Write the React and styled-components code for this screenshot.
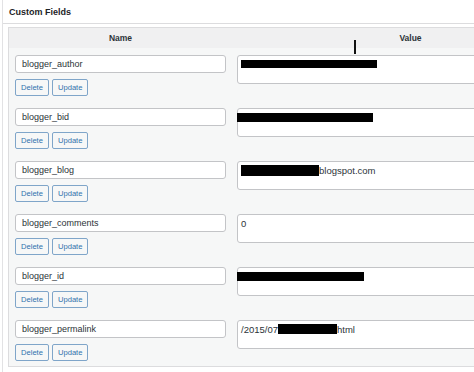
import React from 'react';
import styled, { createGlobalStyle } from 'styled-components';

const GlobalStyle = createGlobalStyle`
  html, body {
    margin: 0;
    padding: 0;
    background: #fff;
    overflow: hidden;
  }

  body {
    font-family: "Liberation Sans", Arial, sans-serif;
    color: #1d2327;
  }
`;

const Page = styled.div`
  position: relative;
  width: 474px;
  height: 372px;
  overflow: hidden;
`;

const Panel = styled.div`
  margin-left: 2px;
  width: 620px;
  min-height: 372px;
  border-left: 1px solid #e2e2e4;
`;

const Heading = styled.h2`
  margin: 0;
  height: 23px;
  display: flex;
  align-items: center;
  padding-left: 6px;
  font-size: 9px;
  font-weight: 700;
  color: #1d2327;
  border-bottom: 1px solid #dcdcde;
`;

const Inside = styled.div`
  padding: 3px 0 0 5px;
`;

const Table = styled.div`
  width: 580px;
  border: 1px solid #dcdcde;
  background: #f6f7f7;
`;

const HeadRow = styled.div`
  display: grid;
  grid-template-columns: 223px 1fr;
  height: 20px;
  background: #f0f0f1;
`;

const HeadCell = styled.div`
  display: flex;
  align-items: center;
  justify-content: center;
  font-size: 8.5px;
  font-weight: 700;
  color: #2c3338;
`;

const Row = styled.div`
  display: grid;
  grid-template-columns: 223px 1fr;
  height: 53px;
`;

const NameCell = styled.div`
  padding: 7px 6px 0 6px;
`;

const KeyInput = styled.input`
  display: block;
  box-sizing: border-box;
  width: 211px;
  height: 18px;
  margin: 0;
  padding: 0 6px;
  border: 1px solid #c3c4c7;
  border-radius: 3px;
  background: #fff;
  font-family: inherit;
  font-size: 9px;
  color: #2c3338;
  outline: none;
`;

const Actions = styled.div`
  display: flex;
  gap: 3px;
  margin-top: 6px;
`;

const SmallButton = styled.button`
  box-sizing: border-box;
  height: 17px;
  padding: 0 5px;
  margin: 0;
  border: 1px solid #7fa5c9;
  border-radius: 2px;
  background: #f6f7f7;
  color: #2f72ad;
  font-family: inherit;
  font-size: 7.6px;
  line-height: 15px;
  cursor: pointer;
`;

const ValueCell = styled.div`
  padding: 7px 0 0 5px;
`;

const ValueBox = styled.div`
  box-sizing: border-box;
  width: 350px;
  height: 29px;
  padding: 3px 3px;
  border: 1px solid #c3c4c7;
  border-radius: 3px;
  background: #fff;
  font-size: 9.5px;
  line-height: 11px;
  color: #2c3338;
  white-space: nowrap;
`;

const Redact = styled.span`
  display: inline-block;
  vertical-align: top;
  width: ${(p) => p.$w}px;
  height: ${(p) => p.$h}px;
  margin-top: ${(p) => p.$top || 0}px;
  margin-left: ${(p) => (p.$bleed ? -4 : 0)}px;
  background: #000;
`;

const Cursor = styled.div`
  position: absolute;
  left: 354px;
  top: 40px;
  width: 2px;
  height: 14px;
  background: #111;
`;

const fields = [
  {
    name: 'blogger_author',
    value: <Redact $w={136} $h={8} $top={1} />,
  },
  {
    name: 'blogger_bid',
    value: <Redact $w={136} $h={9} $top={1} $bleed />,
  },
  {
    name: 'blogger_blog',
    value: (
      <>
        <Redact $w={78} $h={11} />
        blogspot.com
      </>
    ),
  },
  {
    name: 'blogger_comments',
    value: <>0</>,
  },
  {
    name: 'blogger_id',
    value: <Redact $w={127} $h={9} $top={1} $bleed />,
  },
  {
    name: 'blogger_permalink',
    value: (
      <>
        /2015/07
        <Redact $w={59} $h={10} />
        html
      </>
    ),
  },
];

const App = () => {
  return (
    <Page>
      <GlobalStyle />
      <Panel>
        <Heading>Custom Fields</Heading>
        <Inside>
          <Table>
            <HeadRow>
              <HeadCell>Name</HeadCell>
              <HeadCell>Value</HeadCell>
            </HeadRow>
            {fields.map((field) => (
              <Row key={field.name}>
                <NameCell>
                  <KeyInput defaultValue={field.name} readOnly />
                  <Actions>
                    <SmallButton>Delete</SmallButton>
                    <SmallButton>Update</SmallButton>
                  </Actions>
                </NameCell>
                <ValueCell>
                  <ValueBox>{field.value}</ValueBox>
                </ValueCell>
              </Row>
            ))}
          </Table>
        </Inside>
      </Panel>
      <Cursor />
    </Page>
  );
};

export default App;
